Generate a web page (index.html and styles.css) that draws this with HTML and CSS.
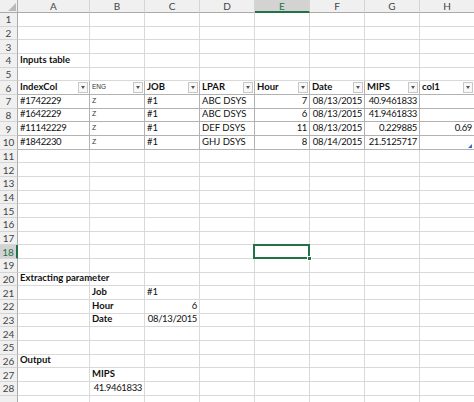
FILE: index.html
```html
<!DOCTYPE html>
<html>
<head>
<meta charset="utf-8">
<link rel="stylesheet" href="styles.css">
</head>
<body>
<div class="sheet">
  <div class="row">
    <div class="corner"><svg class="tri" width="8" height="8" viewBox="0 0 8 8"><polygon points="8,0 8,8 0,8" fill="#b9b9b9"/></svg></div>
    <div class="ch">A</div><div class="ch">B</div><div class="ch">C</div><div class="ch">D</div><div class="ch sel">E</div><div class="ch">F</div><div class="ch">G</div><div class="ch">H</div>
  </div>
  <div class="row"><div class="rh">1</div><div class="c"></div><div class="c"></div><div class="c"></div><div class="c"></div><div class="c"></div><div class="c"></div><div class="c"></div><div class="c"></div></div>
  <div class="row"><div class="rh">2</div><div class="c"></div><div class="c"></div><div class="c"></div><div class="c"></div><div class="c"></div><div class="c"></div><div class="c"></div><div class="c"></div></div>
  <div class="row"><div class="rh">3</div><div class="c"></div><div class="c"></div><div class="c"></div><div class="c"></div><div class="c"></div><div class="c"></div><div class="c"></div><div class="c"></div></div>
  <div class="row"><div class="rh">4</div><div class="c b">Inputs table</div><div class="c"></div><div class="c"></div><div class="c"></div><div class="c"></div><div class="c"></div><div class="c"></div><div class="c"></div></div>
  <div class="row"><div class="rh">5</div><div class="c"></div><div class="c"></div><div class="c"></div><div class="c"></div><div class="c"></div><div class="c"></div><div class="c"></div><div class="c"></div></div>
  <div class="row">
    <div class="rh">6</div>
    <div class="c t th b">IndexCol<span class="fb"></span></div>
    <div class="c t th"><span class="eng">ENG</span><span class="fb"></span></div>
    <div class="c t th b">JOB<span class="fb"></span></div>
    <div class="c t th b">LPAR<span class="fb"></span></div>
    <div class="c t th b">Hour<span class="fb"></span></div>
    <div class="c t th b">Date<span class="fb"></span></div>
    <div class="c t th b">MIPS<span class="fb"></span></div>
    <div class="c t th b">col1<span class="fb"></span></div>
  </div>
  <div class="row"><div class="rh">7</div><div class="c t n">#1742229</div><div class="c t z">Z</div><div class="c t">#1</div><div class="c t">ABC DSYS</div><div class="c t r n">7</div><div class="c t r n">08/13/2015</div><div class="c t r n">40.9461833</div><div class="c t"></div></div>
  <div class="row"><div class="rh">8</div><div class="c t n">#1642229</div><div class="c t z">Z</div><div class="c t">#1</div><div class="c t">ABC DSYS</div><div class="c t r n">6</div><div class="c t r n">08/13/2015</div><div class="c t r n">41.9461833</div><div class="c t"></div></div>
  <div class="row"><div class="rh">9</div><div class="c t n">#11142229</div><div class="c t z">Z</div><div class="c t">#1</div><div class="c t">DEF DSYS</div><div class="c t r n">11</div><div class="c t r n">08/13/2015</div><div class="c t r n">0.229885</div><div class="c t r n">0.69</div></div>
  <div class="row"><div class="rh">10</div><div class="c t n">#1842230</div><div class="c t z">Z</div><div class="c t">#1</div><div class="c t">GHJ DSYS</div><div class="c t r n">8</div><div class="c t r n">08/14/2015</div><div class="c t r n">21.5125717</div><div class="c t last"><span class="rs"></span></div></div>
  <div class="row"><div class="rh">11</div><div class="c"></div><div class="c"></div><div class="c"></div><div class="c"></div><div class="c"></div><div class="c"></div><div class="c"></div><div class="c"></div></div>
  <div class="row"><div class="rh">12</div><div class="c"></div><div class="c"></div><div class="c"></div><div class="c"></div><div class="c"></div><div class="c"></div><div class="c"></div><div class="c"></div></div>
  <div class="row"><div class="rh">13</div><div class="c"></div><div class="c"></div><div class="c"></div><div class="c"></div><div class="c"></div><div class="c"></div><div class="c"></div><div class="c"></div></div>
  <div class="row"><div class="rh">14</div><div class="c"></div><div class="c"></div><div class="c"></div><div class="c"></div><div class="c"></div><div class="c"></div><div class="c"></div><div class="c"></div></div>
  <div class="row"><div class="rh">15</div><div class="c"></div><div class="c"></div><div class="c"></div><div class="c"></div><div class="c"></div><div class="c"></div><div class="c"></div><div class="c"></div></div>
  <div class="row"><div class="rh">16</div><div class="c"></div><div class="c"></div><div class="c"></div><div class="c"></div><div class="c"></div><div class="c"></div><div class="c"></div><div class="c"></div></div>
  <div class="row"><div class="rh">17</div><div class="c"></div><div class="c"></div><div class="c"></div><div class="c"></div><div class="c"></div><div class="c"></div><div class="c"></div><div class="c"></div></div>
  <div class="row"><div class="rh sel">18</div><div class="c"></div><div class="c"></div><div class="c"></div><div class="c"></div><div class="c active"><span class="handle"></span></div><div class="c"></div><div class="c"></div><div class="c"></div></div>
  <div class="row"><div class="rh">19</div><div class="c"></div><div class="c"></div><div class="c"></div><div class="c"></div><div class="c"></div><div class="c"></div><div class="c"></div><div class="c"></div></div>
  <div class="row"><div class="rh">20</div><div class="c b">Extracting parameter</div><div class="c"></div><div class="c"></div><div class="c"></div><div class="c"></div><div class="c"></div><div class="c"></div><div class="c"></div></div>
  <div class="row"><div class="rh">21</div><div class="c"></div><div class="c b">Job</div><div class="c">#1</div><div class="c"></div><div class="c"></div><div class="c"></div><div class="c"></div><div class="c"></div></div>
  <div class="row"><div class="rh">22</div><div class="c"></div><div class="c b">Hour</div><div class="c r n">6</div><div class="c"></div><div class="c"></div><div class="c"></div><div class="c"></div><div class="c"></div></div>
  <div class="row"><div class="rh">23</div><div class="c"></div><div class="c b">Date</div><div class="c r n">08/13/2015</div><div class="c"></div><div class="c"></div><div class="c"></div><div class="c"></div><div class="c"></div></div>
  <div class="row"><div class="rh">24</div><div class="c"></div><div class="c"></div><div class="c"></div><div class="c"></div><div class="c"></div><div class="c"></div><div class="c"></div><div class="c"></div></div>
  <div class="row"><div class="rh">25</div><div class="c"></div><div class="c"></div><div class="c"></div><div class="c"></div><div class="c"></div><div class="c"></div><div class="c"></div><div class="c"></div></div>
  <div class="row"><div class="rh">26</div><div class="c b">Output</div><div class="c"></div><div class="c"></div><div class="c"></div><div class="c"></div><div class="c"></div><div class="c"></div><div class="c"></div></div>
  <div class="row"><div class="rh">27</div><div class="c"></div><div class="c b">MIPS</div><div class="c"></div><div class="c"></div><div class="c"></div><div class="c"></div><div class="c"></div><div class="c"></div></div>
  <div class="row"><div class="rh">28</div><div class="c"></div><div class="c r n">41.9461833</div><div class="c"></div><div class="c"></div><div class="c"></div><div class="c"></div><div class="c"></div><div class="c"></div></div>
  <div class="row"><div class="rh"></div><div class="c"></div><div class="c"></div><div class="c"></div><div class="c"></div><div class="c"></div><div class="c"></div><div class="c"></div><div class="c"></div></div>
</div>
</body>
</html>
```
FILE: styles.css
```css
html, body {
  margin: 0;
  padding: 0;
  background: #fff;
  overflow: hidden;
}
.sheet {
  display: grid;
  grid-template-columns: 18px 72px repeat(7, 55px);
  grid-template-rows: 13px repeat(29, 13.68px);
  width: 474px;
  height: 402px;
  overflow: hidden;
  font-family: Lato, "Open Sans", sans-serif;
  font-size: 9.5px;
  color: #111;
}
.row { display: contents; }
.corner {
  background: #f0f0f0;
  border-right: 1px solid #ababab;
  border-bottom: 1px solid #ababab;
  position: relative;
}
.tri { position: absolute; right: 1px; bottom: 1px; }
.ch {
  background: #f0f0f0;
  border-right: 1px solid #d5d5d5;
  border-bottom: 1px solid #ababab;
  display: flex;
  align-items: center;
  justify-content: center;
  color: #444;
  font-size: 10px;
  min-width: 0;
}
.ch.sel {
  background: #d3d3d3;
  color: #217346;
  border-bottom: 2px solid #217346;
}
.rh {
  background: #f0f0f0;
  border-right: 1px solid #ababab;
  border-bottom: 1px solid #d5d5d5;
  display: flex;
  align-items: center;
  justify-content: center;
  color: #444;
  font-size: 10px;
}
.rh.sel {
  background: #d3d3d3;
  color: #217346;
  border-right: 2px solid #217346;
}
.c {
  border-right: 1px solid #d9d9d9;
  border-bottom: 1px solid #d9d9d9;
  display: flex;
  align-items: flex-end;
  padding: 0 2px 1px;
  line-height: 12px;
  white-space: nowrap;
  min-width: 0;
  position: relative;
}
.r { justify-content: flex-end; }
.n { letter-spacing: -0.35px; }
.b { font-weight: 700; }
.t { border-color: #b2b2b2; }
.th { padding-right: 1px; }
.eng {
  font-family: "Liberation Sans", sans-serif;
  font-size: 6.5px;
  font-weight: 400;
  color: #333;
}
.z {
  font-family: "Liberation Sans", sans-serif;
  font-size: 7px;
  color: #333;
}
.fb {
  margin-left: auto;
  align-self: center;
  width: 8px;
  height: 9px;
  border: 1px solid #c8c8c8;
  background: #f8f8f8;
  display: flex;
  align-items: center;
  justify-content: center;
}
.fb::after {
  content: "";
  border-left: 2.5px solid transparent;
  border-right: 2.5px solid transparent;
  border-top: 3px solid #555;
}
.active::after {
  content: "";
  position: absolute;
  left: -2px;
  top: -1px;
  right: -1px;
  bottom: -1px;
  border: 2px solid #217346;
}
.handle {
  position: absolute;
  right: -3px;
  bottom: -3px;
  width: 5px;
  height: 5px;
  background: #217346;
  border: 1px solid #fff;
  box-sizing: border-box;
  z-index: 2;
}
.rs {
  position: absolute;
  right: 2px;
  bottom: 1px;
  width: 0;
  height: 0;
  border-left: 4px solid transparent;
  border-bottom: 4px solid #3a6cc0;
}
```
